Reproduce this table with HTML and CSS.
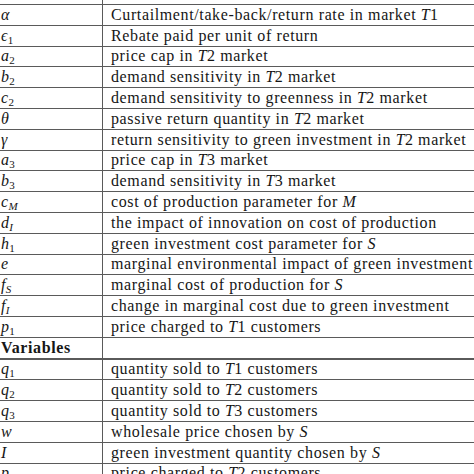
FILE: index.html
```html
<!DOCTYPE html>
<html>
<head>
<meta charset="utf-8">
<link rel="stylesheet" href="styles.css">
</head>
<body>
<table class="tbl">
  <tr class="top"><td class="sym"></td><td class="desc"></td></tr>
  <tr><td class="sym"><i>α</i></td><td class="desc">Curtailment/take-back/return rate in market <i>T</i>1</td></tr>
  <tr><td class="sym"><i>ϵ</i><sub>1</sub></td><td class="desc">Rebate paid per unit of return</td></tr>
  <tr><td class="sym"><i>a</i><sub>2</sub></td><td class="desc">price cap in <i>T</i>2 market</td></tr>
  <tr><td class="sym"><i>b</i><sub>2</sub></td><td class="desc">demand sensitivity in <i>T</i>2 market</td></tr>
  <tr><td class="sym"><i>c</i><sub>2</sub></td><td class="desc">demand sensitivity to greenness in <i>T</i>2 market</td></tr>
  <tr><td class="sym"><i>θ</i></td><td class="desc">passive return quantity in <i>T</i>2 market</td></tr>
  <tr><td class="sym"><i>γ</i></td><td class="desc">return sensitivity to green investment in <i>T</i>2 market</td></tr>
  <tr><td class="sym"><i>a</i><sub>3</sub></td><td class="desc">price cap in <i>T</i>3 market</td></tr>
  <tr><td class="sym"><i>b</i><sub>3</sub></td><td class="desc">demand sensitivity in <i>T</i>3 market</td></tr>
  <tr><td class="sym"><i>c</i><sub><i>M</i></sub></td><td class="desc">cost of production parameter for <i>M</i></td></tr>
  <tr><td class="sym"><i>d</i><sub><i>I</i></sub></td><td class="desc">the impact of innovation on cost of production</td></tr>
  <tr><td class="sym"><i>h</i><sub>1</sub></td><td class="desc">green investment cost parameter for <i>S</i></td></tr>
  <tr><td class="sym"><i>e</i></td><td class="desc">marginal environmental impact of green investment</td></tr>
  <tr><td class="sym"><i>f</i><sub><i>S</i></sub></td><td class="desc">marginal cost of production for <i>S</i></td></tr>
  <tr><td class="sym"><i>f</i><sub><i>I</i></sub></td><td class="desc">change in marginal cost due to green investment</td></tr>
  <tr><td class="sym"><i>p</i><sub>1</sub></td><td class="desc">price charged to <i>T</i>1 customers</td></tr>
  <tr class="section"><td class="sym"><b>Variables</b></td><td class="desc"></td></tr>
  <tr><td class="sym"><i>q</i><sub>1</sub></td><td class="desc">quantity sold to <i>T</i>1 customers</td></tr>
  <tr><td class="sym"><i>q</i><sub>2</sub></td><td class="desc">quantity sold to <i>T</i>2 customers</td></tr>
  <tr><td class="sym"><i>q</i><sub>3</sub></td><td class="desc">quantity sold to <i>T</i>3 customers</td></tr>
  <tr><td class="sym"><i>w</i></td><td class="desc">wholesale price chosen by <i>S</i></td></tr>
  <tr><td class="sym"><i>I</i></td><td class="desc">green investment quantity chosen by <i>S</i></td></tr>
  <tr><td class="sym"><i>p</i><sub>2</sub></td><td class="desc">price charged to <i>T</i>2 customers</td></tr>
</table>
</body>
</html>
```
FILE: styles.css
```css
html, body {
  margin: 0;
  padding: 0;
  background: #fff;
  overflow: hidden;
  width: 474px;
  height: 474px;
}
.tbl {
  border-collapse: collapse;
  width: 560px;
  font-family: "Liberation Serif", serif;
  font-size: 16px;
  letter-spacing: 0.62px;
  color: #161616;
  white-space: nowrap;
}
.tbl td {
  height: 19.8px;
  padding: 0;
  border-top: 1px solid #5a5a5a;
  line-height: 18px;
  vertical-align: middle;
}
.tbl tr.top td {
  height: 4px;
  border-top: none;
}
.tbl tr.section + tr td {
  border-top: 2px solid #5a5a5a;
}
.sym {
  width: 101px;
  padding-left: 1px !important;
  border-right: 1px solid #5a5a5a;
}
.desc {
  padding-left: 8px !important;
}
i {
  letter-spacing: 0.3px;
}
sub {
  font-size: 11px;
  vertical-align: -3px;
  line-height: 0;
  letter-spacing: 0;
}
b {
  font-weight: bold;
  letter-spacing: 0.6px;
}
```
